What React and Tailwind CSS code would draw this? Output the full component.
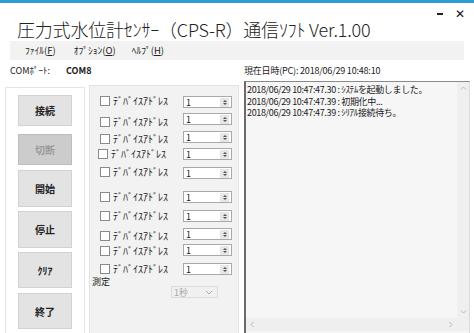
const jp = { fontFamily: '"Noto Sans CJK JP", "Noto Sans", sans-serif' }

const buttons = [
  { label: '接続', cls: 'mt-[7px] h-[31px]' },
  { label: '切断', cls: 'mt-[8px] h-[31px]', disabled: true },
  { label: '開始', cls: 'mt-[5px] h-[37px]' },
  { label: '停止', cls: 'mt-[4px] h-[37px]' },
  { label: 'ｸﾘｱ', cls: 'mt-[4px] h-[36px]' },
  { label: '終了', cls: 'mt-[5px] h-[36px]' },
]

// label column / spin column offsets are independent, as in the form
const labelGaps = ['mt-[9px]', 'mt-[9px]', 'mt-[5px]', 'mt-[3px]', 'mt-[6px]', 'mt-[13px]', 'mt-[7px]', 'mt-[8px]', 'mt-[3px]', 'mt-[6px]']
const spinGaps = ['mt-[10px]', 'mt-[5px]', 'mt-[6px]', 'mt-[5px]', 'mt-[7px]', 'mt-[12px]', 'mt-[7px]', 'mt-[6px]', 'mt-[4px]', 'mt-[7px]']

const logLines = [
  '2018/06/29 10:47:47.30 : ｼｽﾃﾑを起動しました。',
  '2018/06/29 10:47:47.39 : 初期化中...',
  '2018/06/29 10:47:47.39 : ｼﾘｱﾙ接続待ち。',
]

function SpinBox({ cls }) {
  return (
    <div className={`${cls} flex h-[12px] w-[49px] items-center border border-[#a9a9a9] bg-white`}>
      <span className="flex-1 pl-[2px] text-[9px] leading-none text-[#222]">1</span>
      <div className="mr-[2px] flex h-[9px] w-[9px] flex-col items-center justify-center gap-[1px] bg-[#e6e6e6]">
        <span className="h-0 w-0 border-x-[2px] border-b-[2px] border-x-transparent border-b-[#555]" />
        <span className="h-0 w-0 border-x-[2px] border-t-[2px] border-x-transparent border-t-[#555]" />
      </div>
    </div>
  )
}

export default function App() {
  return (
    <div className="relative h-[333px] w-[474px] overflow-hidden bg-white text-[#1a1a1a]" style={jp}>
      <div className="h-[3px] bg-[#2d9bd8]" />

      <div className="flex h-[38px] items-start justify-between">
        <h1 className="ml-[17px] mt-[17px] text-[18px] font-light leading-none tracking-[-0.2px] text-[#222]">
          圧力式水位計ｾﾝｻｰ（CPS-R）通信ｿﾌﾄ Ver.1.00
        </h1>
        <div className="mr-[9px] mt-[4px] flex items-center gap-[12px] text-[12px] text-[#111]">
          <span className="mt-[2px] block h-[2px] w-[6px] bg-[#222]" />
          <span className="leading-none">✕</span>
        </div>
      </div>

      <div className="mx-[10px] flex h-[19px] items-center gap-[16px] bg-[#f2f2f2] pl-[15px] text-[9.5px] text-[#222]">
        <span>ﾌｧｲﾙ(<span className="underline">F</span>)</span>
        <span className="ml-[2px]">ｵﾌﾟｼｮﾝ(<span className="underline">O</span>)</span>
        <span>ﾍﾙﾌﾟ(<span className="underline">H</span>)</span>
      </div>

      <div className="flex h-[22px] items-center text-[9px]">
        <span className="ml-[10px] w-[56px]">COMﾎﾟｰﾄ:</span>
        <span className="w-[178px] font-bold">COM8</span>
        <span className="tracking-[-0.2px]">現在日時(PC): 2018/06/29 10:48:10</span>
      </div>

      <div className="flex items-start">
        <div className="ml-[5px] mt-[5px] flex h-[250px] w-[80px] flex-col items-center border border-[#e4e4e4] bg-white">
          {buttons.map((b) => (
            <button
              key={b.label}
              className={`${b.cls} w-[54px] border text-[10px] font-bold ${
                b.disabled ? 'border-[#bdbdbd] bg-[#cccccc] text-[#9a9a9a]' : 'border-[#d2d2d2] bg-[#e3e3e3] text-[#222]'
              }`}
            >
              {b.label}
            </button>
          ))}
        </div>

        <div className="ml-[4px] mt-[3px] flex h-[252px] w-[150px] flex-col border border-[#e2e2e2] bg-[#f2f2f2]">
          <div className="flex">
            <div className="flex flex-col pl-[10px]">
              {labelGaps.map((g, i) => (
                <div key={i} className={`${g} flex h-[12px] items-center gap-[3px] ${i === 3 ? '-ml-[2px]' : ''}`}>
                  <span className="block h-[10px] w-[10px] border border-[#8a8a8a] bg-white" />
                  <span className="text-[10px] leading-none text-[#222]">ﾃﾞﾊﾞｲｽｱﾄﾞﾚｽ</span>
                </div>
              ))}
            </div>
            <div className="ml-auto mr-[6px] flex flex-col">
              {spinGaps.map((g, i) => (
                <SpinBox key={i} cls={g} />
              ))}
            </div>
          </div>
          <div className="flex items-start">
            <span className="ml-[2px] mt-[0px] text-[9px] text-[#222]">測定</span>
            <div className="ml-[61px] mt-[11px] flex h-[12px] w-[47px] items-center border border-[#dcdcdc] bg-[#f0f0f0] text-[9px] text-[#a8a8a8]">
              <span className="flex-1 pl-[2px] leading-none">1秒</span>
              <svg width="8" height="5" viewBox="0 0 8 5" className="mr-[4px]">
                <path d="M1 1l3 3 3-3" fill="none" stroke="#aaa" strokeWidth="1" />
              </svg>
            </div>
          </div>
        </div>

        <div className="-mt-[1px] ml-[5px] flex h-[252px] w-[226px] flex-col border-l-2 border-t border-r border-l-[#6a6a6a] border-t-[#8a8a8a] border-r-[#dcdcdc] bg-[#f6f6f6]">
          <div className="flex flex-1">
            <div className="flex-1 pl-[1px] pt-[2px] text-[9px] leading-[11.5px] tracking-[-0.35px] text-[#222]">
              {logLines.map((l) => (
                <div key={l}>{l}</div>
              ))}
            </div>
            <div className="flex w-[12px] flex-col items-center justify-between bg-[#efefef] py-[4px] text-[#b0b0b0]">
              <svg width="7" height="4" viewBox="0 0 7 4"><path d="M1 3.5l2.5-2.5 2.5 2.5" fill="none" stroke="#b5b5b5" /></svg>
              <svg width="7" height="4" viewBox="0 0 7 4"><path d="M1 .5l2.5 2.5 2.5-2.5" fill="none" stroke="#b5b5b5" /></svg>
            </div>
          </div>
          <div className="mb-[2px] flex h-[13px]">
            <div className="flex flex-1 items-center justify-between bg-[#efefef] px-[4px]">
              <svg width="4" height="7" viewBox="0 0 4 7"><path d="M3.5 1l-2.5 2.5 2.5 2.5" fill="none" stroke="#b5b5b5" /></svg>
              <svg width="4" height="7" viewBox="0 0 4 7"><path d="M.5 1l2.5 2.5-2.5 2.5" fill="none" stroke="#b5b5b5" /></svg>
            </div>
            <div className="w-[12px] bg-[#efefef]" />
          </div>
        </div>
      </div>
    </div>
  )
}
